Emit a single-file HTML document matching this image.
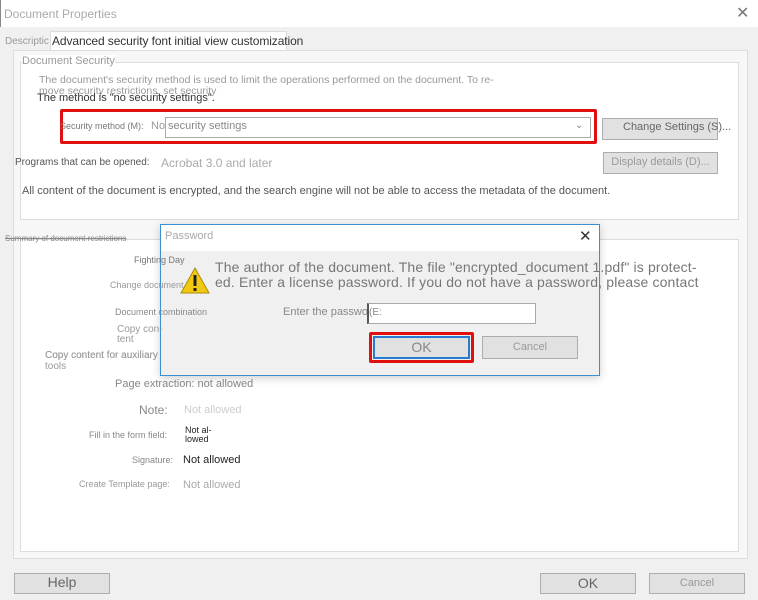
<!DOCTYPE html>
<html><head><meta charset="utf-8"><style>
*{margin:0;padding:0;box-sizing:border-box}
body{width:758px;height:600px;position:relative;background:#f0f0f0;font-family:"Liberation Sans",sans-serif;overflow:hidden;color:#555}
.a{position:absolute;white-space:nowrap}
.btn{position:absolute;background:#e1e1e1;border:1px solid #adadad;text-align:center;color:#666;white-space:nowrap}
</style></head><body>
<div class="a" style="left:0;top:0;width:758px;height:27px;background:#fff;border-left:1px solid #888"></div>
<div class="a" style="left:4px;top:7px;font-size:12px;color:#aaa">Document Properties</div>
<div class="a" style="left:736px;top:3px;font-size:16px;color:#777">✕</div>
<div class="a" style="left:5px;top:36px;font-size:10px;color:#999">Descriptic</div>
<div class="a" style="left:50px;top:31px;width:237px;height:20px;background:#fff;border:1px solid #ddd;border-bottom:none"></div>
<div class="a" style="left:52px;top:34px;font-size:12px;color:#333;letter-spacing:-0.1px">Advanced security font initial view customization</div>
<div class="a" style="left:13px;top:50px;width:735px;height:509px;background:#f7f7f7;border:1px solid #ddd"></div>
<div class="a" style="left:20px;top:62px;width:719px;height:158px;background:#fff;border:1px solid #ddd"></div>
<div class="a" style="left:22px;top:55px;font-size:11px;color:#999;background:#fff">Document Security</div>
<div class="a" style="left:39px;top:75px;font-size:10.5px;color:#999;line-height:11px">The document's security method is used to limit the operations performed on the document. To re-<br>move security restrictions, set security</div>
<div class="a" style="left:37px;top:92px;font-size:11px;color:#333">The method is "no security settings".</div>
<div class="a" style="left:60px;top:109px;width:537px;height:35px;border:3px solid #e01010;border-radius:2px"></div>
<div class="a" style="left:60px;top:121px;font-size:9px;color:#777">Security method (M):</div>
<div class="a" style="left:151px;top:120px;font-size:11px;color:#999">No</div>
<div class="a" style="left:165px;top:117px;width:426px;height:21px;border:1px solid #aaa;background:#fff"></div>
<div class="a" style="left:168px;top:120px;font-size:11px;color:#888">security settings</div>
<div class="a" style="left:575px;top:120px;font-size:10px;color:#888">⌄</div>
<div class="btn" style="left:602px;top:118px;width:116px;height:22px;font-size:11px;line-height:17px;padding-left:20px;text-align:left;overflow:visible">Change Settings (S)...</div>
<div class="a" style="left:15px;top:157px;font-size:10px;color:#555">Programs that can be opened:</div>
<div class="a" style="left:161px;top:156px;font-size:12px;color:#aaa">Acrobat 3.0 and later</div>
<div class="btn" style="left:603px;top:152px;width:115px;height:22px;font-size:11px;line-height:18px;color:#999">Display details (D)...</div>
<div class="a" style="left:22px;top:185px;font-size:11px;color:#555">All content of the document is encrypted, and the search engine will not be able to access the metadata of the document.</div>
<div class="a" style="left:20px;top:239px;width:719px;height:313px;background:#fff;border:1px solid #ddd"></div>
<div class="a" style="left:5px;top:234px;font-size:8px;color:#888;text-decoration:line-through">Summary of document restrictions</div>
<div class="a" style="left:45px;top:350px;font-size:10px;color:#999;line-height:11px">Copy content for auxiliary<br>tools</div>
<div class="a" style="left:115px;top:378px;font-size:11px;color:#888">Page extraction: not allowed</div>
<div class="a" style="left:139px;top:403px;font-size:12px;color:#888">Note:</div>
<div class="a" style="left:184px;top:404px;font-size:11px;color:#ccc">Not allowed</div>
<div class="a" style="left:89px;top:430px;font-size:9px;color:#888">Fill in the form field:</div>
<div class="a" style="left:185px;top:426px;font-size:9px;color:#222;line-height:9px">Not al-<br>lowed</div>
<div class="a" style="left:132px;top:455px;font-size:9px;color:#888">Signature:</div>
<div class="a" style="left:183px;top:454px;font-size:11px;color:#222">Not allowed</div>
<div class="a" style="left:79px;top:479px;font-size:9px;color:#999">Create Template page:</div>
<div class="a" style="left:183px;top:479px;font-size:11px;color:#aaa">Not allowed</div>
<div class="btn" style="left:14px;top:573px;width:96px;height:21px;font-size:14px;line-height:17px">Help</div>
<div class="btn" style="left:540px;top:573px;width:96px;height:21px;font-size:14px;line-height:19px">OK</div>
<div class="btn" style="left:649px;top:573px;width:96px;height:21px;font-size:11px;line-height:19px;color:#999">Cancel</div>
<div class="a" style="left:160px;top:224px;width:440px;height:152px;background:#f0f0f0;border:1px solid #3c8fd0;box-shadow:0 2px 8px rgba(0,0,0,.2)"></div>
<div class="a" style="left:161px;top:225px;width:438px;height:26px;background:#fff"></div>
<div class="a" style="left:165px;top:230px;font-size:11px;color:#aaa">Password</div>
<div class="a" style="left:579px;top:227px;font-size:15px;color:#333">✕</div>
<div class="a" style="left:134px;top:255px;font-size:9px;color:#777">Fighting Day</div>
<div class="a" style="left:110px;top:280px;font-size:9px;color:#999">Change document</div>
<div class="a" style="left:115px;top:307px;font-size:9px;color:#888">Document combination</div>
<div class="a" style="left:117px;top:325px;font-size:10px;color:#999;line-height:10px">Copy con-<br>tent</div>
<div class="a" style="left:45px;top:350px;font-size:10px;color:#999;line-height:11px">Copy content for auxiliary</div>
<svg class="a" style="left:180px;top:267px" width="30" height="27" viewBox="0 0 30 27"><path d="M15 1 L29 26 L1 26 Z" fill="#f2c90e" stroke="#a88a10" stroke-width="1"/><rect x="13.5" y="8" width="3" height="11" fill="#222"/><rect x="13.5" y="21" width="3" height="3" fill="#222"/></svg>
<div class="a" style="left:215px;top:260px;font-size:14px;color:#777;line-height:15px;letter-spacing:0.15px">The author of the document. The file "encrypted_document 1.pdf" is protect-<br>ed. Enter a license password. If you do not have a password, please contact</div>
<div class="a" style="left:283px;top:306px;font-size:11px;color:#888">Enter the password (E:</div>
<div class="a" style="left:367px;top:303px;width:169px;height:21px;background:#fff;border:1px solid #aaa;border-left:2px solid #555"></div>
<div class="a" style="left:369px;top:307px;font-size:10px;color:#888">(E:</div>
<div class="a" style="left:369px;top:332px;width:105px;height:31px;border:3px solid #e01010;border-radius:2px"></div>
<div class="btn" style="left:373px;top:336px;width:97px;height:23px;border:2px solid #2a7bd0;font-size:14px;line-height:19px;color:#888">OK</div>
<div class="btn" style="left:482px;top:336px;width:96px;height:23px;font-size:11px;line-height:21px;color:#999">Cancel</div>
</body></html>
